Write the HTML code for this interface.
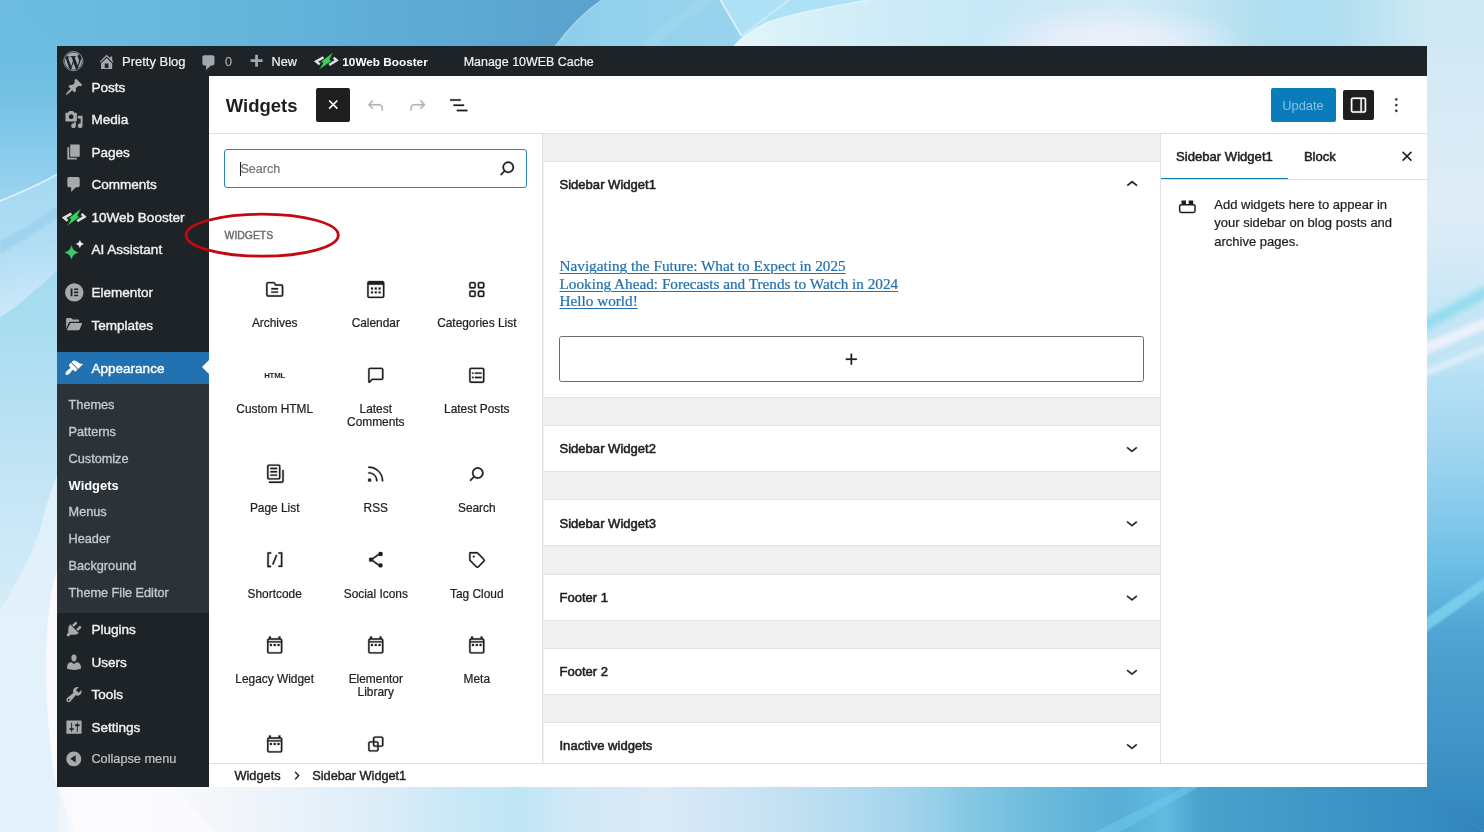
<!DOCTYPE html>
<html lang="en">
<head>
<meta charset="utf-8">
<title>Widgets ‹ Pretty Blog — WordPress</title>
<style>
*{box-sizing:border-box;margin:0;padding:0}
html,body{width:1484px;height:832px;overflow:hidden;background:#7cc4e4}
body{position:relative;font-family:"Liberation Sans",sans-serif;color:#1e1e1e}
.abs{position:absolute}
.t{position:absolute;white-space:nowrap;line-height:1;-webkit-text-stroke:0.22px currentColor}
#bg{position:absolute;left:0;top:0;width:1484px;height:832px}
#win{position:absolute;left:57px;top:45.7px;width:1370px;height:741px;background:#fff;overflow:hidden}
#pg{position:absolute;left:-57px;top:-45.7px;width:1484px;height:832px;will-change:transform}
#adminbar{left:57px;top:45.5px;width:1370px;height:30.2px;background:#1d2327}
#menu{left:57px;top:75.7px;width:152px;height:712.3px;background:#1d2327}
#submenu{left:57px;top:383.8px;width:152px;height:228.8px;background:#2c3338}
#current{left:57px;top:351.8px;width:152px;height:32px;background:#2271b1}
#header{left:209px;top:75.7px;width:1218px;height:58.7px;background:#fff;border-bottom:1px solid #e0e0e0}
#inserter{left:209px;top:134.4px;width:334px;height:628.6px;background:#fff;border-right:1px solid #e0e0e0}
#canvas{left:543px;top:134.4px;width:617.5px;height:628.6px;background:#f0f0f0}
#side{left:1159.5px;top:134.4px;width:267px;height:628.6px;background:#fff;border-left:1px solid #e0e0e0}
#footer{left:209px;top:762.5px;width:1218px;height:25px;background:#fff;border-top:1px solid #e0e0e0}
.card{position:absolute;left:543.5px;width:616px;background:#fff;border-top:1px solid #e2e2e2;border-bottom:1px solid #e2e2e2}
</style>
</head>
<body>
<svg id="bg" viewBox="0 0 1484 832" preserveAspectRatio="none">
<defs>
<linearGradient id="gt" x1="0" y1="0" x2="1" y2="0"><stop offset="0.0000" stop-color="#6cbde1"/><stop offset="0.1011" stop-color="#68b9de"/><stop offset="0.2022" stop-color="#62b2d9"/><stop offset="0.3032" stop-color="#5daad3"/><stop offset="0.3774" stop-color="#5aa4ce"/><stop offset="0.4077" stop-color="#58a2cc"/><stop offset="0.4084" stop-color="#92d0ea"/><stop offset="0.4178" stop-color="#92d0ea"/><stop offset="0.4717" stop-color="#97d2ec"/><stop offset="0.4973" stop-color="#9bd5ee"/><stop offset="0.5020" stop-color="#b4e2f5"/><stop offset="0.5323" stop-color="#bfe8f7"/><stop offset="0.5728" stop-color="#cdeef8"/><stop offset="0.6402" stop-color="#cfeaf6"/><stop offset="0.7075" stop-color="#dcebf7"/><stop offset="0.7547" stop-color="#e6eef9"/><stop offset="0.7951" stop-color="#d3e9f6"/><stop offset="0.8491" stop-color="#b2dff1"/><stop offset="0.8962" stop-color="#addcef"/><stop offset="0.9434" stop-color="#bfe3f2"/><stop offset="1.0000" stop-color="#cde7f3"/></linearGradient>
<linearGradient id="gb" x1="0" y1="0" x2="1" y2="0"><stop offset="0.0000" stop-color="#e2f0fa"/><stop offset="0.0371" stop-color="#e9f3fb"/><stop offset="0.0505" stop-color="#f8f8fc"/><stop offset="0.1348" stop-color="#f6f7fb"/><stop offset="0.1752" stop-color="#eef4fa"/><stop offset="0.2561" stop-color="#dcedf8"/><stop offset="0.3100" stop-color="#c8e8f6"/><stop offset="0.3504" stop-color="#bfe6f5"/><stop offset="0.3908" stop-color="#d2e9f6"/><stop offset="0.4447" stop-color="#dbeaf7"/><stop offset="0.5121" stop-color="#c8e3f3"/><stop offset="0.5728" stop-color="#b4dbf0"/><stop offset="0.6199" stop-color="#9dd2ea"/><stop offset="0.6631" stop-color="#7ec5e2"/><stop offset="0.7143" stop-color="#66b7da"/><stop offset="0.7547" stop-color="#58aed6"/><stop offset="0.7850" stop-color="#5fbbe0"/><stop offset="0.8086" stop-color="#4aa3cd"/><stop offset="0.8760" stop-color="#4098c7"/><stop offset="0.9434" stop-color="#398ec3"/><stop offset="0.9704" stop-color="#358bc0"/><stop offset="1.0000" stop-color="#2f84bc"/></linearGradient>
<linearGradient id="gl" x1="0" y1="0" x2="0" y2="1"><stop offset="0.0000" stop-color="#6cbde1"/><stop offset="0.0553" stop-color="#6cbde1"/><stop offset="0.1202" stop-color="#74c1e4"/><stop offset="0.1683" stop-color="#84c9ea"/><stop offset="0.2163" stop-color="#93d0ee"/><stop offset="0.2464" stop-color="#9fd6f1"/><stop offset="0.3125" stop-color="#a6daf0"/><stop offset="0.3846" stop-color="#a8dcf0"/><stop offset="0.4567" stop-color="#b2dff2"/><stop offset="0.5288" stop-color="#bce3f4"/><stop offset="0.6010" stop-color="#c6e6f6"/><stop offset="0.6731" stop-color="#cdeaf7"/><stop offset="0.7452" stop-color="#d6edf8"/><stop offset="0.8413" stop-color="#e0f0fa"/><stop offset="0.9459" stop-color="#e6f2fb"/><stop offset="1.0000" stop-color="#e4f1fa"/></linearGradient>
<linearGradient id="gr" x1="0" y1="0" x2="0" y2="1"><stop offset="0.0000" stop-color="#cfe8f3"/><stop offset="0.1202" stop-color="#d6eaf5"/><stop offset="0.2404" stop-color="#deedf8"/><stop offset="0.3245" stop-color="#d4e9f6"/><stop offset="0.3606" stop-color="#c9e6f5"/><stop offset="0.4327" stop-color="#bfe3f5"/><stop offset="0.4567" stop-color="#b5dff5"/><stop offset="0.5409" stop-color="#a0d5f0"/><stop offset="0.6370" stop-color="#7ec6ea"/><stop offset="0.6731" stop-color="#6fc0e6"/><stop offset="0.7212" stop-color="#5eb2dd"/><stop offset="0.7572" stop-color="#4fa5d3"/><stop offset="0.8413" stop-color="#4699ca"/><stop offset="0.8894" stop-color="#4294c7"/><stop offset="0.9459" stop-color="#388dc2"/><stop offset="1.0000" stop-color="#2f84bc"/></linearGradient>
<filter id="b05" x="-20%" y="-20%" width="140%" height="140%"><feGaussianBlur stdDeviation="0.6"/></filter>
<filter id="b2" x="-20%" y="-20%" width="140%" height="140%"><feGaussianBlur stdDeviation="2"/></filter>
<filter id="b1" x="-20%" y="-20%" width="140%" height="140%"><feGaussianBlur stdDeviation="1.2"/></filter>
<filter id="b3" x="-20%" y="-20%" width="140%" height="140%"><feGaussianBlur stdDeviation="3"/></filter>
<linearGradient id="gA" gradientUnits="userSpaceOnUse" x1="556" y1="0" x2="800" y2="0"><stop offset="0" stop-color="#8ccdea"/><stop offset="0.25" stop-color="#94d1ec"/><stop offset="0.7" stop-color="#97d3ed"/><stop offset="1" stop-color="#a0d8f0"/></linearGradient><linearGradient id="gC" gradientUnits="userSpaceOnUse" x1="733" y1="0" x2="1484" y2="0"><stop offset="0" stop-color="#e6f6fb"/><stop offset="0.07" stop-color="#d9f1f9"/><stop offset="0.2" stop-color="#cfecf8"/><stop offset="0.34" stop-color="#c6e8f6"/><stop offset="0.45" stop-color="#cfe9f6"/><stop offset="0.52" stop-color="#d2eaf7"/><stop offset="0.6" stop-color="#c6e6f4"/><stop offset="0.72" stop-color="#aedeef"/><stop offset="0.8" stop-color="#afdef0"/><stop offset="0.87" stop-color="#c0e4f2"/><stop offset="0.925" stop-color="#cee8f3"/><stop offset="1" stop-color="#d0e8f4"/></linearGradient><linearGradient id="gCv" x1="0" y1="0" x2="0" y2="1"><stop offset="0" stop-color="#bfe6f5" stop-opacity="0.55"/><stop offset="1" stop-color="#bfe6f5" stop-opacity="0"/></linearGradient><radialGradient id="gBlob" cx="0.5" cy="0.5" r="0.5"><stop offset="0" stop-color="#f0f1fb" stop-opacity="0.95"/><stop offset="0.5" stop-color="#ecf0fa" stop-opacity="0.7"/><stop offset="1" stop-color="#e6eef9" stop-opacity="0"/></radialGradient><linearGradient id="gP1" gradientUnits="userSpaceOnUse" x1="20" y1="185" x2="40" y2="300"><stop offset="0" stop-color="#a5d9f2"/><stop offset="0.5" stop-color="#b0ddf4"/><stop offset="1" stop-color="#c9e6f8"/></linearGradient>
</defs>
<path d="M0 0H1484L1427 46H57Z" fill="url(#gt)"/>
<path d="M0 832H1484L1427 787H57Z" fill="url(#gb)"/>
<path d="M0 0L58 46V787L0 832Z" fill="url(#gl)"/>
<path d="M1484 0L1426 46V787L1484 832Z" fill="url(#gr)"/>
<path d="M555 47 C568 29 584 12 602 0 L800 0 L800 47 Z" fill="url(#gA)"/>
<path d="M555 47 C568 29 584 12 602 0" fill="none" stroke="#a9dbf1" stroke-width="1.6" opacity="0.8"/>
<path d="M640 47 C655 30 680 12 700 0 L716 0 C694 14 668 32 655 47 Z" fill="#a6d9ef" opacity="0.45"/>
<path d="M721 0 L741.500 36 L733 47 L900 47 L900 0 Z" fill="#ade1f6"/>
<path d="M733 47 C745 35 758 26 770 21.500 C795 12.500 830 7 868 0 L1484 0 L1484 47 Z" fill="url(#gC)"/>
<path d="M720.500 0 L741.500 36" fill="none" stroke="#eaf6fc" stroke-width="1.6" opacity="0.85" filter="url(#b05)"/>
<path d="M741.500 36 L789 0" fill="none" stroke="#d3eef9" stroke-width="2.200" opacity="0.7" filter="url(#b05)"/>
<path d="M733 47 C745 35 758 26 770 21.500 C795 12.500 830 7 868 0" fill="none" stroke="#f2fafd" stroke-width="1.400" opacity="0.6" filter="url(#b05)"/>
<ellipse cx="1112" cy="50" rx="140" ry="48" fill="url(#gBlob)"/>
<path d="M0 201 C20 193 40 184 58 174 L58 269 C40 287 20 304 0 318 Z" fill="url(#gP1)"/>
<path d="M0 241 C20 231 40 218 58 205 L58 217 C40 230 20 243 0 254 Z" fill="#8fc8e9" opacity="0.45" filter="url(#b1)"/>
<path d="M0 201 C20 193 40 184 58 174" fill="none" stroke="#e4f4fc" stroke-width="1.500" opacity="0.9" filter="url(#b05)"/>
<path d="M58 474 C50 490 45 510 40 530 C30 560 12 590 0 610 L0 832 L58 832 Z" fill="#e4f1fb" opacity="0.85"/>
<path d="M58 567 C50 590 47 620 46 660 C46 710 50 760 58 792 Z" fill="#fbfafd" opacity="0.95"/>
<path d="M1420 334 L1490 296 L1490 284 L1420 321 Z" fill="#8bdbee" opacity="0.9" filter="url(#b3)"/>
<path d="M1420 357 L1490 327 L1490 316 L1420 345 Z" fill="#edf2fb" opacity="0.95" filter="url(#b2)"/>
<path d="M1420 379 L1490 350 L1490 343 L1420 371 Z" fill="#e6f0fa" opacity="0.8" filter="url(#b2)"/>
<path d="M1420 636 L1490 586 L1490 574 L1420 622 Z" fill="#80d3ee" opacity="0.8" filter="url(#b1)"/>
<path d="M1095 832 L1186 786 L1200 786 L1120 832 Z" fill="#6cc6e8" opacity="0.6"/>
<path d="M57 786 L175 786 L215 832 L75 832 Z" fill="#fbfafd" opacity="0.9"/>
</svg>
<div id="win"><div id="pg">
<div class="abs" id="adminbar"></div>
<div class="abs" id="menu"></div>
<div class="abs" id="submenu"></div>
<div class="abs" id="current"></div>
<div class="abs" id="header"></div>
<div class="abs" id="inserter"></div>
<div class="abs" id="canvas"></div>
<div class="abs" id="side"></div>
<svg class="abs" style="left:63px;top:51px;width:21px;height:21px;overflow:visible;" viewBox="0 0 21 21" fill="#a6abb0"><g transform="translate(0.350 0.100) scale(1.00000 1.00000) translate(-0 -0)"><circle cx="10" cy="10" r="9.600" fill="none" stroke="#a6abb0" stroke-width="0.800"/><path transform="translate(10 10) scale(0.965) translate(-10 -10)" d="M7.780 15.370L4.370 6.220c.55-.02 1.170-.08 1.170-.08.5-.06.44-1.130-.06-1.110 0 0-1.450.11-2.370.11-.18 0-.37 0-.58-.01C4.120 2.690 6.870 1.110 10 1.110c2.330 0 4.450.87 6.050 2.340-.68-.11-1.650.39-1.650 1.580 0 .74.450 1.360.9 2.100.35.61.55 1.360.55 2.460 0 1.490-1.400 5-1.400 5l-3.030-8.370c.54-.02.82-.17.82-.17.5-.05.440-1.250-.06-1.220 0 0-1.440.12-2.380.12-.87 0-2.330-.12-2.330-.12-.5-.03-.56 1.200-.06 1.220l.92.080 1.260 3.410zM17.410 10c.24-.64.740-1.870.430-4.250.7 1.290 1.050 2.710 1.050 4.250 0 3.290-1.730 6.240-4.400 7.780.97-2.590 1.940-5.200 2.920-7.780zM6.100 18.090C3.120 16.650 1.110 13.530 1.110 10c0-1.300.230-2.480.72-3.590C3.250 10.300 4.670 14.200 6.100 18.090zm4.030-6.630l2.580 6.980c-.86.290-1.760.450-2.710.450-.79 0-1.570-.11-2.290-.33.810-2.380 1.620-4.740 2.420-7.100z"/></g></svg>
<svg class="abs" style="left:97px;top:52px;width:19px;height:19px;overflow:visible;" viewBox="0 0 19 19" fill="#a3a8ad"><g transform="translate(0.300 0.300) scale(0.93000 0.93000) translate(-0 -0)"><path d="M16 8.500l1.530 1.530-1.060 1.060L10 4.620l-6.470 6.470-1.060-1.060L10 2.500l4 4v-2h2v4zm-6-2.460l6 5.990V18H4v-5.970zM12 17v-5H8v5h4z"/></g></svg>
<div class="t" style="left:122.00px;top:53.00px;font-size:12.98px;line-height:17px;color:#f0f0f1;">Pretty Blog</div>
<svg class="abs" style="left:199px;top:53px;width:20px;height:19px;overflow:visible;" viewBox="0 0 20 19" fill="#a3a8ad"><g transform="translate(0.600 0.300) scale(0.93000 0.93000) translate(-0 -0)"><path d="M5 2h9c1.100 0 2 .9 2 2v7c0 1.100-.9 2-2 2h-2l-5 5v-5H5c-1.100 0-2-.9-2-2V4c0-1.100.9-2 2-2z"/></g></svg>
<div class="t" style="left:225.00px;top:53.63px;font-size:12.6px;line-height:16px;color:#a7aaad;">0</div>
<svg class="abs" style="left:246px;top:52px;width:20px;height:20px;overflow:visible;" viewBox="0 0 20 20" fill="#a3a8ad"><g transform="translate(0.800 0.800) scale(0.93000 0.93000) translate(-0 -0)"><path d="M17 7v3h-5v5H9v-5H4V7h5V2h3v5h5z"/></g></svg>
<div class="t" style="left:271.60px;top:53.62px;font-size:12.65px;line-height:16px;color:#f0f0f1;">New</div>
<svg class="abs" style="left:313px;top:52px;width:26px;height:18px;overflow:visible;overflow:visible;" viewBox="0 0 26 18" fill="none"><g transform="translate(0.700 0.100) scale(1.00000 1.00000) translate(-0 -0)"><path d="M9.800 5.300 L2.400 9.400 L6.000 12.300" fill="none" stroke="#dfe1e4" stroke-width="2.500" stroke-linejoin="miter"/><path d="M19.900 5.500 L23.000 8.300 L15.500 12.700" fill="none" stroke="#dfe1e4" stroke-width="2.500" stroke-linejoin="miter"/><path d="M19.700 -0.200 L6.400 10.100 L9.300 10.700 L5.200 17.900 L18.800 8.300 L16.000 7.700 Z" fill="#37d15a" stroke="#1d2327" stroke-width="0.700"/></g></svg>
<div class="t" style="left:342.30px;top:54.42px;font-size:11.77px;line-height:15px;color:#ffffff;font-weight:700;-webkit-text-stroke:0;">10Web Booster</div>
<div class="t" style="left:463.75px;top:53.69px;font-size:12.44px;line-height:16px;color:#f0f0f1;">Manage 10WEB Cache</div>
<div class="t" style="left:91.40px;top:78.60px;font-size:13.55px;line-height:18px;color:#f0f0f1;-webkit-text-stroke:0.4px currentColor;">Posts</div>
<svg class="abs" style="left:64px;top:77px;width:20px;height:20px;overflow:visible;" viewBox="0 0 20 20" fill="#a7aaad"><g transform="translate(0.500 0.500) scale(0.95000 0.95000) translate(-0 -0)"><path d="M10.440 3.020l1.820-1.820 6.360 6.350-1.830 1.820c-1.050-.68-2.480-.57-3.410.36l-.75.750c-.92.930-1.040 2.350-.35 3.410l-1.830 1.820-2.410-2.410-2.800 2.790c-.42.420-3.380 2.710-3.800 2.290s1.860-3.390 2.280-3.810l2.790-2.790L4.100 9.360l1.830-1.820c1.050.69 2.480.57 3.400-.36l.75-.75c.93-.92 1.050-2.350.36-3.410z"/></g></svg>
<div class="t" style="left:91.40px;top:111.10px;font-size:13.55px;line-height:18px;color:#f0f0f1;-webkit-text-stroke:0.4px currentColor;">Media</div>
<svg class="abs" style="left:64px;top:110px;width:20px;height:19px;overflow:visible;" viewBox="0 0 20 19" fill="#a7aaad"><g transform="translate(0.500 0.000) scale(0.95000 0.95000) translate(-0 -0)"><path d="M13 11V4c0-.55-.45-1-1-1h-1.670L9 1H5L3.670 3H2c-.55 0-1 .45-1 1v7c0 .55.450 1 1 1h10c.55 0 1-.45 1-1zM7 4.500c1.380 0 2.500 1.120 2.500 2.500S8.380 9.500 7 9.500 4.500 8.380 4.500 7 5.620 4.500 7 4.500zM14 6h5v10.500c0 1.380-1.120 2.500-2.500 2.500S14 17.880 14 16.500s1.120-2.500 2.500-2.500c.17 0 .34.020.5.050V9h-3V6zm-4 8.050V13h2v3.500c0 1.380-1.120 2.500-2.500 2.500S7 17.880 7 16.500 8.120 14 9.500 14c.17 0 .34.020.5.050z"/></g></svg>
<div class="t" style="left:91.40px;top:143.60px;font-size:13.55px;line-height:18px;color:#f0f0f1;-webkit-text-stroke:0.4px currentColor;">Pages</div>
<svg class="abs" style="left:64px;top:142px;width:20px;height:20px;overflow:visible;" viewBox="0 0 20 20" fill="#a7aaad"><g transform="translate(0.500 0.500) scale(0.95000 0.95000) translate(-0 -0)"><path d="M6 15V2h10v13H6zm-1 1h8v2H3V5h2v11z"/></g></svg>
<div class="t" style="left:91.40px;top:176.10px;font-size:13.55px;line-height:18px;color:#f0f0f1;-webkit-text-stroke:0.4px currentColor;">Comments</div>
<svg class="abs" style="left:64px;top:175px;width:20px;height:19px;overflow:visible;" viewBox="0 0 20 19" fill="#a7aaad"><g transform="translate(0.500 0.000) scale(0.95000 0.95000) translate(-0 -0)"><path d="M5 2h9c1.100 0 2 .9 2 2v7c0 1.100-.9 2-2 2h-2l-5 5v-5H5c-1.100 0-2-.9-2-2V4c0-1.100.9-2 2-2z"/></g></svg>
<div class="t" style="left:91.40px;top:208.50px;font-size:13.55px;line-height:18px;color:#f0f0f1;-webkit-text-stroke:0.4px currentColor;">10Web Booster</div>
<div class="t" style="left:91.40px;top:241.30px;font-size:13.55px;line-height:18px;color:#f0f0f1;-webkit-text-stroke:0.4px currentColor;">AI Assistant</div>
<div class="t" style="left:91.40px;top:284.30px;font-size:13.55px;line-height:18px;color:#f0f0f1;-webkit-text-stroke:0.4px currentColor;">Elementor</div>
<div class="t" style="left:91.40px;top:316.70px;font-size:13.55px;line-height:18px;color:#f0f0f1;-webkit-text-stroke:0.4px currentColor;">Templates</div>
<div class="t" style="left:91.40px;top:359.50px;font-size:13.55px;line-height:18px;color:#ffffff;-webkit-text-stroke:0.4px currentColor;">Appearance</div>
<svg class="abs" style="left:64px;top:358px;width:20px;height:20px;overflow:visible;" viewBox="0 0 20 20" fill="#ffffff"><g transform="translate(0.500 0.400) scale(0.95000 0.95000) translate(-0 -0)"><path d="M14.480 11.060L7.410 3.990l1.500-1.500c.5-.56 2.300-.47 3.510.32 1.210.800 1.430 1.280 2.910 2.100 1.180.64 2.450 1.260 4.450.85zm-.71.710L6.700 4.700 4.930 6.470c-.39.390-.39 1.020 0 1.410l1.060 1.060c.39.390.39 1.030 0 1.420-.6.600-1.430 1.110-2.210 1.690-.35.260-.7.530-1.010.840C1.430 14.230.4 16.080 1.400 17.070c.99 1 2.840-.03 4.180-1.360.31-.31.580-.66.850-1.020.57-.78 1.080-1.610 1.690-2.210.39-.39 1.020-.39 1.410 0l1.060 1.060c.390.39 1.020.39 1.410 0z"/></g></svg>
<div class="t" style="left:91.40px;top:620.70px;font-size:13.55px;line-height:18px;color:#f0f0f1;-webkit-text-stroke:0.4px currentColor;">Plugins</div>
<svg class="abs" style="left:64px;top:619px;width:20px;height:20px;overflow:visible;" viewBox="0 0 20 20" fill="#a7aaad"><g transform="translate(0.500 0.600) scale(0.95000 0.95000) translate(-0 -0)"><path d="M13.110 4.360L9.870 7.600 8 5.730l3.240-3.240c.35-.34 1.050-.2 1.560.32.520.51.660 1.210.31 1.550zm-8 1.770l.91-1.120 9.010 9.010-1.190.84c-.71.710-2.630 1.160-3.820 1.160H6.140L4.900 17.260c-.59.59-1.540.59-2.120 0-.59-.58-.59-1.530 0-2.120l1.240-1.240v-3.880c0-1.130.4-3.190 1.090-3.890zm7.260 3.970l3.240-3.240c.34-.35 1.040-.21 1.550.31.520.51.660 1.210.31 1.550l-3.240 3.250z"/></g></svg>
<div class="t" style="left:91.40px;top:653.80px;font-size:13.55px;line-height:18px;color:#f0f0f1;-webkit-text-stroke:0.4px currentColor;">Users</div>
<svg class="abs" style="left:64px;top:652px;width:20px;height:20px;overflow:visible;" viewBox="0 0 20 20" fill="#a7aaad"><g transform="translate(0.500 0.700) scale(0.95000 0.95000) translate(-0 -0)"><path d="M10 9.250c-2.270 0-2.730-3.440-2.730-3.440C7 4.020 7.820 2 9.970 2c2.160 0 2.980 2.020 2.710 3.810 0 0-.41 3.440-2.680 3.440zm0 2.570L12.720 10c2.390 0 4.520 2.330 4.520 4.530v2.490s-3.650 1.130-7.240 1.130c-3.650 0-7.240-1.130-7.240-1.130v-2.490c0-2.250 1.940-4.480 4.470-4.480z"/></g></svg>
<div class="t" style="left:91.40px;top:686.20px;font-size:13.55px;line-height:18px;color:#f0f0f1;-webkit-text-stroke:0.4px currentColor;">Tools</div>
<svg class="abs" style="left:64px;top:685px;width:20px;height:20px;overflow:visible;" viewBox="0 0 20 20" fill="#a7aaad"><g transform="translate(0.500 0.100) scale(0.95000 0.95000) translate(-0 -0)"><path d="M16.680 9.770c-1.340 1.340-3.300 1.670-4.950.99l-5.410 6.520c-.99.990-2.590.99-3.580 0s-.99-2.590 0-3.570l6.520-5.420c-.68-1.650-.35-3.610.99-4.950 1.280-1.280 3.120-1.620 4.720-1.060l-2.890 2.890 2.820 2.820 2.860-2.870c.53 1.580.18 3.390-1.080 4.650zM3.810 16.210c.4.390 1.040.39 1.430 0 .4-.4.400-1.040 0-1.430-.39-.4-1.030-.4-1.430 0-.39.390-.39 1.030 0 1.430z"/></g></svg>
<div class="t" style="left:91.40px;top:718.80px;font-size:13.55px;line-height:18px;color:#f0f0f1;-webkit-text-stroke:0.4px currentColor;">Settings</div>
<svg class="abs" style="left:64px;top:717px;width:20px;height:20px;overflow:visible;" viewBox="0 0 20 20" fill="#a7aaad"><g transform="translate(0.500 0.700) scale(0.95000 0.95000) translate(-0 -0)"><path d="M18 16V4c0-.55-.45-1-1-1H3c-.55 0-1 .45-1 1v12c0 .55.450 1 1 1h14c.55 0 1-.45 1-1zM8 11h1c.55 0 1 .45 1 1s-.45 1-1 1H8v1.500c0 .28-.22.500-.5.500s-.5-.22-.5-.5V13H6c-.55 0-1-.45-1-1s.45-1 1-1h1V5.500c0-.28.220-.5.500-.5s.5.220.5.500V11zm5-2h-1c-.55 0-1-.45-1-1s.45-1 1-1h1V5.500c0-.28.220-.5.500-.5s.5.220.5.500V7h1c.55 0 1 .45 1 1s-.45 1-1 1h-1v5.500c0 .28-.22.500-.5.500s-.5-.22-.5-.5V9z"/></g></svg>
<svg class="abs" style="left:61px;top:208px;width:26px;height:19px;overflow:visible;overflow:visible;" viewBox="0 0 26 19" fill="none"><g transform="translate(0.600 0.400) scale(1.00000 1.00000) translate(-0 -0)"><path d="M9.800 5.300 L2.400 9.400 L6.000 12.300" fill="none" stroke="#dfe1e4" stroke-width="2.500" stroke-linejoin="miter"/><path d="M19.900 5.500 L23.000 8.300 L15.500 12.700" fill="none" stroke="#dfe1e4" stroke-width="2.500" stroke-linejoin="miter"/><path d="M19.700 -0.200 L6.400 10.100 L9.300 10.700 L5.200 17.900 L18.800 8.300 L16.000 7.700 Z" fill="#37d15a" stroke="#1d2327" stroke-width="0.700"/></g></svg>
<svg class="abs" style="left:57px;top:236px;width:40px;height:30px;overflow:visible;" viewBox="0 0 40 30" fill="none"><g transform="translate(0.000 0.000) scale(1.00000 1.00000) translate(-57 -236)"><path d="M71.5 245.20000000000002 C73.084 249.8656 74.0344 250.816 78.7 252.4 C74.0344 253.984 73.084 254.9344 71.5 259.6 C69.916 254.9344 68.9656 253.984 64.3 252.4 C68.9656 250.816 69.916 249.8656 71.5 245.20000000000002Z" fill="#3fc46c"/><path d="M79.9 239.8 C80.82400000000001 242.5216 81.3784 243.076 84.10000000000001 244.0 C81.3784 244.924 80.82400000000001 245.4784 79.9 248.2 C78.976 245.4784 78.42160000000001 244.924 75.7 244.0 C78.42160000000001 243.076 78.976 242.5216 79.9 239.8Z" fill="#eceef0"/></g></svg>
<svg class="abs" style="left:65px;top:283px;width:19px;height:19px;overflow:visible;" viewBox="0 0 19 19" fill="none"><g transform="translate(0.100 0.200) scale(0.92000 0.92000) translate(-0 -0)"><circle cx="10" cy="10" r="10" fill="#a7aaad"/><path d="M6 5.800h2v8.400H6zM9.800 5.800h4.400v1.700H9.800zM9.800 9.150h4.400v1.700H9.800zM9.800 12.500h4.400v1.700H9.800z" fill="#1d2327"/></g></svg>
<svg class="abs" style="left:65px;top:316px;width:18px;height:16px;overflow:visible;" viewBox="0 0 18 16" fill="none"><g transform="translate(0.130 0.350) scale(0.97000 0.96875) translate(-0 -0)"><path d="M1 2.600 C1 2 1.400 1.600 2 1.600 H6.200 L7.800 3.300 H13.400 C14 3.300 14.400 3.700 14.400 4.300 V5.600 H5.200 C4.500 5.600 4 5.900 3.700 6.600 L1 12.800 Z" fill="#a7aaad"/><path d="M5.400 6.800 H17 C17.500 6.800 17.700 7.200 17.500 7.700 L14.900 13.600 C14.700 14.100 14.300 14.400 13.800 14.400 H1.600 Z" fill="#a7aaad"/></g></svg>
<div class="t" style="left:68.60px;top:397.40px;font-size:12.7px;line-height:17px;color:#c6c8ca;-webkit-text-stroke:0.35px currentColor;">Themes</div>
<div class="t" style="left:68.60px;top:424.10px;font-size:12.7px;line-height:17px;color:#c6c8ca;-webkit-text-stroke:0.35px currentColor;">Patterns</div>
<div class="t" style="left:68.60px;top:450.90px;font-size:12.7px;line-height:17px;color:#c6c8ca;-webkit-text-stroke:0.35px currentColor;">Customize</div>
<div class="t" style="left:68.60px;top:477.23px;font-size:12.9px;line-height:17px;color:#ffffff;font-weight:700;-webkit-text-stroke:0;">Widgets</div>
<div class="t" style="left:68.60px;top:504.30px;font-size:12.7px;line-height:17px;color:#c6c8ca;-webkit-text-stroke:0.35px currentColor;">Menus</div>
<div class="t" style="left:68.60px;top:531.00px;font-size:12.7px;line-height:17px;color:#c6c8ca;-webkit-text-stroke:0.35px currentColor;">Header</div>
<div class="t" style="left:68.60px;top:557.90px;font-size:12.7px;line-height:17px;color:#c6c8ca;-webkit-text-stroke:0.35px currentColor;">Background</div>
<div class="t" style="left:68.60px;top:584.80px;font-size:12.7px;line-height:17px;color:#c6c8ca;-webkit-text-stroke:0.35px currentColor;">Theme File Editor</div>
<div class="abs" style="left:202px;top:360.3px;width:0;height:0;border:7.6px solid transparent;border-right-color:#fff;border-left-width:0"></div>
<svg class="abs" style="left:64px;top:749px;width:20px;height:20px;overflow:visible;" viewBox="0 0 20 20" fill="#a7aaad"><g transform="translate(0.300 0.400) scale(0.95000 0.95000) translate(-0 -0)"><path d="M10 2.160c4.330 0 7.840 3.510 7.840 7.840s-3.510 7.840-7.840 7.840S2.160 14.330 2.160 10 5.670 2.160 10 2.160zm2 11.720V6.120L6.180 9.970z"/></g></svg>
<div class="t" style="left:91.40px;top:750.09px;font-size:12.74px;line-height:17px;color:#bfc2c5;">Collapse menu</div>
<div class="t" style="left:225.75px;top:93.59px;font-size:18.5px;line-height:24px;color:#1e1e1e;font-weight:700;-webkit-text-stroke:0;">Widgets</div>
<div class="abs" style="left:316.2px;top:88px;width:34.1px;height:34px;background:#1e1e1e;border-radius:2px"></div>
<svg class="abs" style="left:327px;top:98px;width:13px;height:13px;overflow:visible;" viewBox="0 0 13 13" fill="none"><g transform="translate(0.250 0.600) scale(1.00000 1.00000) translate(6 6)"><path d="M-4.100 -4.100L4.100 4.100M4.100 -4.100L-4.100 4.100" stroke="#fff" stroke-width="1.650" fill="none"/></g></svg>
<svg class="abs" style="left:364px;top:93px;width:24px;height:24px;overflow:visible;" viewBox="0 0 24 24" fill="#b4b4b4"><g transform="translate(0.170 0.770) scale(0.95250 0.95250) translate(-0 -0)"><g stroke="#b4b4b4" stroke-width="0.3"><path d="M18.300 11.700c-.6-.6-1.400-.9-2.300-.9H6.700l2.900-3.300-1.100-1-4.500 5L8.500 16l1-1-2.700-2.700H16c.5 0 .9.200 1.300.5 1 1 1 3.400 1 4.500v.3h1.500v-.2c0-1.500 0-4.300-1.500-5.700z"/></g></g></svg>
<svg class="abs" style="left:406px;top:93px;width:24px;height:24px;overflow:visible;" viewBox="0 0 24 24" fill="#b4b4b4"><g transform="translate(0.170 0.770) scale(0.95250 0.95250) translate(-0 -0)"><g stroke="#b4b4b4" stroke-width="0.3"><path d="M15.600 6.500l-1.100 1 2.900 3.300H8c-.9 0-1.700.3-2.300.9-1.400 1.500-1.400 4.200-1.400 5.600v.2h1.500v-.3c0-1.100 0-3.500 1-4.500.3-.3.700-.5 1.300-.5h9.200L14.500 15l1.100 1.100 4.600-4.600-4.600-5z"/></g></g></svg>
<svg class="abs" style="left:447px;top:93px;width:24px;height:24px;overflow:visible;" viewBox="0 0 24 24" fill="#1e1e1e"><g transform="translate(0.370 0.570) scale(0.95250 0.95250) translate(-0 -0)"><g stroke="#1e1e1e" stroke-width="0.3"><path d="M3 6h11v1.500H3V6Zm3.500 5.500h11V13h-11v-1.500ZM21 17H10v1.500h11V17Z"/></g></g></svg>
<div class="abs" style="left:1270.6px;top:87.8px;width:65.2px;height:34.3px;background:#0a7cba;border-radius:2px"></div>
<div class="t" style="left:1282.20px;top:96.73px;font-size:12.9px;line-height:17px;color:#86c1e3;-webkit-text-stroke:0;">Update</div>
<div class="abs" style="left:1343.1px;top:89.9px;width:30.6px;height:30.4px;background:#1e1e1e;border-radius:2px"></div>
<svg class="abs" style="left:1347px;top:93px;width:23px;height:24px;overflow:visible;" viewBox="0 0 23 24" fill="#fff"><g transform="translate(0.070 0.670) scale(0.95250 0.95250) translate(-0 -0)"><g stroke="#fff" stroke-width="0.3"><path fill-rule="evenodd" clip-rule="evenodd" d="M18 4H6c-1.100 0-2 .9-2 2v12c0 1.100.9 2 2 2h12c1.100 0 2-.9 2-2V6c0-1.100-.9-2-2-2zm-4 14.500H6c-.3 0-.5-.2-.5-.5V6c0-.3.200-.5.500-.5h8v13zm4.500-.5c0 .3-.2.500-.5.500h-2.500v-13H18c.3 0 .5.200.5.500v12z"/></g></g></svg>
<svg class="abs" style="left:1384px;top:93px;width:24px;height:24px;overflow:visible;" viewBox="0 0 24 24" fill="#1e1e1e"><g transform="translate(0.870 0.670) scale(0.95250 0.95250) translate(-0 -0)"><g stroke="#1e1e1e" stroke-width="0.3"><path d="M13 19h-2v-2h2v2zm0-6h-2v-2h2v2zm0-6h-2V5h2v2z"/></g></g></svg>
<div class="abs" style="left:223.7px;top:148.7px;width:303.7px;height:39.7px;border:1.9px solid #2a84be;border-radius:3px;background:#fff"></div>
<div class="abs" style="left:239.9px;top:161.7px;width:1px;height:14px;background:#1e1e1e"></div>
<div class="t" style="left:240.40px;top:161.13px;font-size:12.6px;line-height:16px;color:#757575;">Search</div>
<svg class="abs" style="left:495px;top:156px;width:24px;height:24px;overflow:visible;" viewBox="0 0 24 24" fill="#1e1e1e"><g transform="translate(0.870 0.770) scale(0.95250 0.95250) translate(-0 -0)"><g stroke="#1e1e1e" stroke-width="0.3"><path d="M13 5c-3.300 0-6 2.700-6 6 0 1.400.5 2.700 1.300 3.700l-3.800 3.800 1.100 1.100 3.800-3.800c1 .8 2.300 1.300 3.700 1.300 3.300 0 6-2.700 6-6S16.300 5 13 5zm0 10.500c-2.500 0-4.500-2-4.500-4.500s2-4.500 4.500-4.500 4.500 2 4.500 4.500-2 4.500-4.500 4.500z"/></g></g></svg>
<div class="t" style="left:224.60px;top:229.19px;font-size:10.41px;line-height:14px;color:#6a6a6a;-webkit-text-stroke:0.4px currentColor;">WIDGETS</div>
<svg class="abs" style="left:263px;top:278px;width:24px;height:23px;overflow:visible;" viewBox="0 0 24 23" fill="#1e1e1e"><g transform="translate(0.270 0.070) scale(0.95250 0.95250) translate(-0 -0)"><g stroke="#1e1e1e" stroke-width="0.3"><path fill-rule="evenodd" clip-rule="evenodd" d="M11.934 7.406a1 1 0 0 0 .914.594H19a.5.5 0 0 1 .5.500v9a.5.5 0 0 1-.5.500H5a.5.5 0 0 1-.5-.5V6a.5.5 0 0 1 .5-.5h5.764a.5.5 0 0 1 .447.276l.723 1.630Zm1.064-1.216a.5.5 0 0 0 .462.310H19a2 2 0 0 1 2 2v9a2 2 0 0 1-2 2H5a2 2 0 0 1-2-2V6a2 2 0 0 1 2-2h5.764a2 2 0 0 1 1.789 1.106l.445 1.084ZM8.500 10.500h7V12h-7v-1.500Zm7 3.500h-7v1.500h7V14Z"/></g></g></svg>
<div class="t" style="left:219.70px;top:317.38px;font-size:11.9px;line-height:13px;color:#1e1e1e;white-space:normal;width:110px;text-align:center;">Archives</div>
<svg class="abs" style="left:364px;top:278px;width:24px;height:23px;overflow:visible;" viewBox="0 0 24 23" fill="#1e1e1e"><g transform="translate(0.370 0.070) scale(0.95250 0.95250) translate(-0 -0)"><g stroke="#1e1e1e" stroke-width="0.3"><path d="M19 3H5c-1.100 0-2 .9-2 2v14c0 1.100.9 2 2 2h14c1.100 0 2-.9 2-2V5c0-1.100-.9-2-2-2zm.5 16c0 .3-.2.500-.5.500H5c-.3 0-.5-.2-.5-.5V7h15v12zM9 10H7v2h2v-2zm0 4H7v2h2v-2zm4-4h-2v2h2v-2zm4 0h-2v2h2v-2zm-4 4h-2v2h2v-2zm4 0h-2v2h2v-2z"/></g></g></svg>
<div class="t" style="left:320.80px;top:317.38px;font-size:11.9px;line-height:13px;color:#1e1e1e;white-space:normal;width:110px;text-align:center;">Calendar</div>
<svg class="abs" style="left:465px;top:278px;width:24px;height:23px;overflow:visible;" viewBox="0 0 24 23" fill="#1e1e1e"><g transform="translate(0.370 0.070) scale(0.95250 0.95250) translate(-0 -0)"><g stroke="#1e1e1e" stroke-width="0.3"><path fill-rule="evenodd" clip-rule="evenodd" d="M6 5.500h3a.5.5 0 01.5.500v3a.5.5 0 01-.5.500H6a.5.5 0 01-.5-.5V6a.5.5 0 01.5-.5zM4 6a2 2 0 012-2h3a2 2 0 012 2v3a2 2 0 01-2 2H6a2 2 0 01-2-2V6zm11-.5h3a.5.5 0 01.5.500v3a.5.5 0 01-.5.500h-3a.5.5 0 01-.5-.5V6a.5.5 0 01.5-.5zM13 6a2 2 0 012-2h3a2 2 0 012 2v3a2 2 0 01-2 2h-3a2 2 0 01-2-2V6zm5 8.500h-3a.5.5 0 00-.5.500v3a.5.5 0 00.5.500h3a.5.5 0 00.5-.5v-3a.5.5 0 00-.5-.5zM15 13a2 2 0 00-2 2v3a2 2 0 002 2h3a2 2 0 002-2v-3a2 2 0 00-2-2h-3zm-9 1.500h3a.5.5 0 01.5.500v3a.5.5 0 01-.5.500H6a.5.5 0 01-.5-.5v-3a.5.5 0 01.5-.5zM4 15a2 2 0 012-2h3a2 2 0 012 2v3a2 2 0 01-2 2H6a2 2 0 01-2-2v-3z"/></g></g></svg>
<div class="t" style="left:421.80px;top:317.38px;font-size:11.9px;line-height:13px;color:#1e1e1e;white-space:normal;width:110px;text-align:center;">Categories List</div>
<div class="t" style="left:254.70px;top:370.51px;font-size:7.9px;line-height:10px;color:#1e1e1e;font-weight:700;-webkit-text-stroke:0;letter-spacing:-0.2px;width:40px;text-align:center;">HTML</div>
<div class="t" style="left:219.70px;top:402.98px;font-size:11.9px;line-height:13px;color:#1e1e1e;white-space:normal;width:110px;text-align:center;">Custom HTML</div>
<svg class="abs" style="left:364px;top:363px;width:24px;height:24px;overflow:visible;" viewBox="0 0 24 24" fill="#1e1e1e"><g transform="translate(0.370 0.870) scale(0.95250 0.95250) translate(-0 -0)"><g stroke="#1e1e1e" stroke-width="0.3"><path d="M18 4H6c-1.100 0-2 .9-2 2v12.900c0 .6.500 1.100 1.100 1.100.3 0 .5-.1.800-.3L8.500 17H18c1.100 0 2-.9 2-2V6c0-1.100-.9-2-2-2zm.5 11c0 .3-.2.500-.5.500H7.900l-2.400 2.400V6c0-.3.200-.5.500-.5h12c.3 0 .5.200.5.500v9z"/></g></g></svg>
<div class="t" style="left:320.80px;top:402.98px;font-size:11.9px;line-height:13px;color:#1e1e1e;white-space:normal;width:110px;text-align:center;">Latest<br>Comments</div>
<svg class="abs" style="left:465px;top:363px;width:24px;height:24px;overflow:visible;" viewBox="0 0 24 24" fill="#1e1e1e"><g transform="translate(0.370 0.870) scale(0.95250 0.95250) translate(-0 -0)"><g stroke="#1e1e1e" stroke-width="0.3"><path d="M18 5.500H6a.5.5 0 0 0-.5.500v12a.5.5 0 0 0 .5.500h12a.5.5 0 0 0 .5-.5V6a.5.5 0 0 0-.5-.5ZM6 4h12a2 2 0 0 1 2 2v12a2 2 0 0 1-2 2H6a2 2 0 0 1-2-2V6a2 2 0 0 1 2-2Zm1 5h1.500v1.500H7V9Zm1.500 4.500H7V15h1.500v-1.500ZM10 9h7v1.500h-7V9Zm7 4.500h-7V15h7v-1.500Z"/></g></g></svg>
<div class="t" style="left:421.80px;top:402.98px;font-size:11.9px;line-height:13px;color:#1e1e1e;white-space:normal;width:110px;text-align:center;">Latest Posts</div>
<svg class="abs" style="left:263px;top:462px;width:24px;height:24px;overflow:visible;" viewBox="0 0 24 24" fill="#1e1e1e"><g transform="translate(0.270 0.470) scale(0.95250 0.95250) translate(-0 -0)"><g stroke="#1e1e1e" stroke-width="0.3"><path d="M14.500 5.500h-7V7h7V5.500ZM7.500 9h7v1.500h-7V9Zm7 3.500h-7V14h7v-1.500Z"/><path fill-rule="evenodd" d="M16 2H6a2 2 0 0 0-2 2v12a2 2 0 0 0 2 2h10a2 2 0 0 0 2-2V4a2 2 0 0 0-2-2ZM6 3.500h10a.5.5 0 0 1 .5.500v12a.5.5 0 0 1-.5.500H6a.5.5 0 0 1-.5-.5V4a.5.5 0 0 1 .5-.5Z"/><path d="M20 8v11c0 .69-.31 1-.999 1H6v1.500h13.001c1.520 0 2.499-.982 2.499-2.500V8H20Z"/></g></g></svg>
<div class="t" style="left:219.70px;top:501.78px;font-size:11.9px;line-height:13px;color:#1e1e1e;white-space:normal;width:110px;text-align:center;">Page List</div>
<svg class="abs" style="left:364px;top:462px;width:24px;height:24px;overflow:visible;" viewBox="0 0 24 24" fill="#1e1e1e"><g transform="translate(0.370 0.470) scale(0.95250 0.95250) translate(-0 -0)"><g stroke="#1e1e1e" stroke-width="0.3"><path d="M5 10.200h-.8v1.500H5c1.900 0 3.800.8 5.100 2.100 1.400 1.400 2.100 3.200 2.100 5.100v.8h1.500V19c0-2.300-.9-4.500-2.600-6.200-1.600-1.600-3.800-2.600-6.100-2.600zm10.400-1.600C12.600 5.800 8.900 4.200 5 4.200h-.8v1.500H5c3.500 0 6.900 1.400 9.400 3.900s3.900 5.800 3.900 9.400v.8h1.500V19c0-3.900-1.600-7.600-4.400-10.400zM4 20h3v-3H4v3z"/></g></g></svg>
<div class="t" style="left:320.80px;top:501.78px;font-size:11.9px;line-height:13px;color:#1e1e1e;white-space:normal;width:110px;text-align:center;">RSS</div>
<svg class="abs" style="left:465px;top:462px;width:24px;height:24px;overflow:visible;" viewBox="0 0 24 24" fill="#1e1e1e"><g transform="translate(0.370 0.470) scale(0.95250 0.95250) translate(-0 -0)"><g stroke="#1e1e1e" stroke-width="0.3"><path d="M13 5c-3.300 0-6 2.700-6 6 0 1.400.5 2.700 1.300 3.700l-3.800 3.800 1.100 1.100 3.800-3.800c1 .8 2.300 1.300 3.700 1.300 3.300 0 6-2.700 6-6S16.300 5 13 5zm0 10.500c-2.500 0-4.500-2-4.500-4.500s2-4.500 4.500-4.500 4.500 2 4.500 4.500-2 4.500-4.500 4.500z"/></g></g></svg>
<div class="t" style="left:421.80px;top:501.78px;font-size:11.9px;line-height:13px;color:#1e1e1e;white-space:normal;width:110px;text-align:center;">Search</div>
<svg class="abs" style="left:263px;top:548px;width:24px;height:24px;overflow:visible;" viewBox="0 0 24 24" fill="#1e1e1e"><g transform="translate(0.270 0.270) scale(0.95250 0.95250) translate(-0 -0)"><g stroke="#1e1e1e" stroke-width="0.3"><path d="M16 4.200v1.500h2.500v12.500H16v1.500h4V4.200h-4zM4.200 19.800h4v-1.500H5.800V5.800h2.500V4.200h-4l-.1 15.600zm5.100-3.100l1.400.6 4-10-1.400-.6-4 10z"/></g></g></svg>
<div class="t" style="left:219.70px;top:587.58px;font-size:11.9px;line-height:13px;color:#1e1e1e;white-space:normal;width:110px;text-align:center;">Shortcode</div>
<svg class="abs" style="left:364px;top:548px;width:24px;height:24px;overflow:visible;" viewBox="0 0 24 24" fill="#1e1e1e"><g transform="translate(0.370 0.270) scale(0.95250 0.95250) translate(-0 -0)"><g stroke="#1e1e1e" stroke-width="0.3"><path d="M9 11.800l6.100-4.500c.1.400.4.700.9.700h2c.6 0 1-.4 1-1V5c0-.6-.4-1-1-1h-2c-.6 0-1 .4-1 1v.4l-6.400 4.800c-.2-.1-.4-.2-.6-.2H6c-.6 0-1 .4-1 1v2c0 .6.400 1 1 1h2c.2 0 .4-.1.600-.2l6.400 4.800v.4c0 .6.400 1 1 1h2c.6 0 1-.4 1-1v-2c0-.6-.4-1-1-1h-2c-.5 0-.8.300-.9.700L9 12.200v-.4z"/></g></g></svg>
<div class="t" style="left:320.80px;top:587.58px;font-size:11.9px;line-height:13px;color:#1e1e1e;white-space:normal;width:110px;text-align:center;">Social Icons</div>
<svg class="abs" style="left:465px;top:548px;width:24px;height:24px;overflow:visible;" viewBox="0 0 24 24" fill="#1e1e1e"><g transform="translate(0.370 0.270) scale(0.95250 0.95250) translate(-0 -0)"><g stroke="#1e1e1e" stroke-width="0.3"><path fill-rule="evenodd" d="M4.750 4a.75.75 0 0 0-.75.750v7.826c0 .2.080.39.220.53l6.720 6.716a2.313 2.313 0 0 0 3.276-.001l5.610-5.611-.531-.53.532.528a2.315 2.315 0 0 0 0-3.264L13.104 4.220a.75.75 0 0 0-.53-.22H4.750ZM19 12.576a.815.815 0 0 1-.236.574l-5.610 5.611a.814.814 0 0 1-1.153 0L5.500 12.264V5.500h6.763l6.500 6.502a.816.816 0 0 1 .237.574ZM8.750 9.750a1 1 0 1 0 0-2 1 1 0 0 0 0 2Z"/></g></g></svg>
<div class="t" style="left:421.80px;top:587.58px;font-size:11.9px;line-height:13px;color:#1e1e1e;white-space:normal;width:110px;text-align:center;">Tag Cloud</div>
<svg class="abs" style="left:263px;top:633px;width:24px;height:24px;overflow:visible;" viewBox="0 0 24 24" fill="#1e1e1e"><g transform="translate(0.270 0.570) scale(0.95250 0.95250) translate(-0 -0)"><g stroke="#1e1e1e" stroke-width="0.3"><path fill-rule="evenodd" d="M6 3H8V5H16V3H18V5C19.105 5 20 5.895 20 7V19C20 20.105 19.105 21 18 21H6C4.895 21 4 20.105 4 19V7C4 5.895 4.895 5 6 5V3ZM18 6.500H6C5.724 6.500 5.500 6.724 5.500 7V8H18.500V7C18.500 6.724 18.276 6.500 18 6.500ZM18.500 9.500H5.500V19C5.500 19.276 5.724 19.500 6 19.500H18C18.276 19.500 18.500 19.276 18.500 19V9.500ZM11 11H13V13H11V11ZM7 11V13H9V11H7ZM15 13V11H17V13H15Z"/></g></g></svg>
<div class="t" style="left:219.70px;top:673.38px;font-size:11.9px;line-height:13px;color:#1e1e1e;white-space:normal;width:110px;text-align:center;">Legacy Widget</div>
<svg class="abs" style="left:364px;top:633px;width:24px;height:24px;overflow:visible;" viewBox="0 0 24 24" fill="#1e1e1e"><g transform="translate(0.370 0.570) scale(0.95250 0.95250) translate(-0 -0)"><g stroke="#1e1e1e" stroke-width="0.3"><path fill-rule="evenodd" d="M6 3H8V5H16V3H18V5C19.105 5 20 5.895 20 7V19C20 20.105 19.105 21 18 21H6C4.895 21 4 20.105 4 19V7C4 5.895 4.895 5 6 5V3ZM18 6.500H6C5.724 6.500 5.500 6.724 5.500 7V8H18.500V7C18.500 6.724 18.276 6.500 18 6.500ZM18.500 9.500H5.500V19C5.500 19.276 5.724 19.500 6 19.500H18C18.276 19.500 18.500 19.276 18.500 19V9.500ZM11 11H13V13H11V11ZM7 11V13H9V11H7ZM15 13V11H17V13H15Z"/></g></g></svg>
<div class="t" style="left:320.80px;top:673.38px;font-size:11.9px;line-height:13px;color:#1e1e1e;white-space:normal;width:110px;text-align:center;">Elementor<br>Library</div>
<svg class="abs" style="left:465px;top:633px;width:24px;height:24px;overflow:visible;" viewBox="0 0 24 24" fill="#1e1e1e"><g transform="translate(0.370 0.570) scale(0.95250 0.95250) translate(-0 -0)"><g stroke="#1e1e1e" stroke-width="0.3"><path fill-rule="evenodd" d="M6 3H8V5H16V3H18V5C19.105 5 20 5.895 20 7V19C20 20.105 19.105 21 18 21H6C4.895 21 4 20.105 4 19V7C4 5.895 4.895 5 6 5V3ZM18 6.500H6C5.724 6.500 5.500 6.724 5.500 7V8H18.500V7C18.500 6.724 18.276 6.500 18 6.500ZM18.500 9.500H5.500V19C5.500 19.276 5.724 19.500 6 19.500H18C18.276 19.500 18.500 19.276 18.500 19V9.500ZM11 11H13V13H11V11ZM7 11V13H9V11H7ZM15 13V11H17V13H15Z"/></g></g></svg>
<div class="t" style="left:421.80px;top:673.38px;font-size:11.9px;line-height:13px;color:#1e1e1e;white-space:normal;width:110px;text-align:center;">Meta</div>
<svg class="abs" style="left:263px;top:732px;width:24px;height:24px;overflow:visible;" viewBox="0 0 24 24" fill="#1e1e1e"><g transform="translate(0.270 0.570) scale(0.95250 0.95250) translate(-0 -0)"><g stroke="#1e1e1e" stroke-width="0.3"><path fill-rule="evenodd" d="M6 3H8V5H16V3H18V5C19.105 5 20 5.895 20 7V19C20 20.105 19.105 21 18 21H6C4.895 21 4 20.105 4 19V7C4 5.895 4.895 5 6 5V3ZM18 6.500H6C5.724 6.500 5.500 6.724 5.500 7V8H18.500V7C18.500 6.724 18.276 6.500 18 6.500ZM18.500 9.500H5.500V19C5.500 19.276 5.724 19.500 6 19.500H18C18.276 19.500 18.500 19.276 18.500 19V9.500ZM11 11H13V13H11V11ZM7 11V13H9V11H7ZM15 13V11H17V13H15Z"/></g></g></svg>
<svg class="abs" style="left:364px;top:732px;width:24px;height:24px;overflow:visible;" viewBox="0 0 24 24" fill="#1e1e1e"><g transform="translate(0.370 0.570) scale(0.95250 0.95250) translate(-0 -0)"><g stroke="#1e1e1e" stroke-width="0.3"><path fill-rule="evenodd" d="M18 4h-7c-1.100 0-2 .9-2 2v3H6c-1.100 0-2 .9-2 2v7c0 1.100.9 2 2 2h7c1.100 0 2-.9 2-2v-3h3c1.100 0 2-.9 2-2V6c0-1.100-.9-2-2-2zm-4.500 14c0 .3-.2.500-.5.500H6c-.3 0-.5-.2-.5-.5v-7c0-.3.200-.5.500-.5h3V13c0 1.100.9 2 2 2h2.500v3zm0-4.500H11c-.3 0-.5-.2-.5-.5v-2.500H13c.3 0 .5.200.5.500v2.500zm5-.5c0 .3-.2.500-.5.500h-3V11c0-1.100-.9-2-2-2h-2.500V6c0-.3.200-.5.500-.5h7c.3 0 .5.200.5.500v7z"/></g></g></svg>
<div class="card" style="top:161px;height:237px"></div>
<div class="t" style="left:559.50px;top:176.23px;font-size:13.05px;line-height:17px;color:#1e1e1e;-webkit-text-stroke:0.55px currentColor;">Sidebar Widget1</div>
<svg class="abs" style="left:1120px;top:173px;width:24px;height:24px;overflow:visible;" viewBox="0 0 24 24" fill="#1e1e1e"><g transform="translate(0.720 0.170) scale(0.95250 0.95250) translate(-0 -0)"><g stroke="#1e1e1e" stroke-width="0.3"><path d="M6.500 12.400L12 8l5.500 4.400-.9 1.200L12 10l-4.500 3.600-1-1.200z"/></g></g></svg>
<div class="t" style="left:559.50px;top:256.11px;font-size:15.24px;line-height:20px;color:#2271b1;font-family:'Liberation Serif',serif;text-decoration:underline;text-decoration-thickness:1px;text-underline-offset:1.5px;">Navigating the Future: What to Expect in 2025</div>
<div class="t" style="left:559.50px;top:273.61px;font-size:15.24px;line-height:20px;color:#2271b1;font-family:'Liberation Serif',serif;text-decoration:underline;text-decoration-thickness:1px;text-underline-offset:1.5px;">Looking Ahead: Forecasts and Trends to Watch in 2024</div>
<div class="t" style="left:559.50px;top:291.11px;font-size:15.24px;line-height:20px;color:#2271b1;font-family:'Liberation Serif',serif;text-decoration:underline;text-decoration-thickness:1px;text-underline-offset:1.5px;">Hello world!</div>
<div class="abs" style="left:559.1px;top:336.1px;width:584.9px;height:46.3px;border:1.6px solid #6b6b6b;border-radius:2.5px;background:#fff"></div>
<svg class="abs" style="left:840px;top:347px;width:24px;height:24px;overflow:visible;" viewBox="0 0 24 24" fill="#1e1e1e"><g transform="translate(0.170 0.970) scale(0.95250 0.95250) translate(-0 -0)"><g stroke="#1e1e1e" stroke-width="0.3"><path d="M11 12.500V17.500H12.500V12.500H17.500V11H12.500V6H11V11H6V12.500H11Z"/></g></g></svg>
<div class="card" style="top:425.20px;height:47px"></div>
<div class="t" style="left:559.50px;top:440.28px;font-size:13.05px;line-height:17px;color:#1e1e1e;-webkit-text-stroke:0.55px currentColor;">Sidebar Widget2</div>
<svg class="abs" style="left:1120px;top:437px;width:24px;height:23px;overflow:visible;" viewBox="0 0 24 23" fill="#1e1e1e"><g transform="translate(0.520 0.070) scale(0.95250 0.95250) translate(-0 -0)"><g stroke="#1e1e1e" stroke-width="0.3"><path d="M17.500 11.600L12 16l-5.500-4.400.9-1.200L12 14l4.500-3.600 1 1.200z"/></g></g></svg>
<div class="card" style="top:499.45px;height:47px"></div>
<div class="t" style="left:559.50px;top:514.53px;font-size:13.05px;line-height:17px;color:#1e1e1e;-webkit-text-stroke:0.55px currentColor;">Sidebar Widget3</div>
<svg class="abs" style="left:1120px;top:511px;width:24px;height:24px;overflow:visible;" viewBox="0 0 24 24" fill="#1e1e1e"><g transform="translate(0.520 0.320) scale(0.95250 0.95250) translate(-0 -0)"><g stroke="#1e1e1e" stroke-width="0.3"><path d="M17.500 11.600L12 16l-5.500-4.400.9-1.200L12 14l4.500-3.600 1 1.200z"/></g></g></svg>
<div class="card" style="top:573.70px;height:47px"></div>
<div class="t" style="left:559.50px;top:588.78px;font-size:13.05px;line-height:17px;color:#1e1e1e;-webkit-text-stroke:0.55px currentColor;">Footer 1</div>
<svg class="abs" style="left:1120px;top:585px;width:24px;height:24px;overflow:visible;" viewBox="0 0 24 24" fill="#1e1e1e"><g transform="translate(0.520 0.570) scale(0.95250 0.95250) translate(-0 -0)"><g stroke="#1e1e1e" stroke-width="0.3"><path d="M17.500 11.600L12 16l-5.500-4.400.9-1.200L12 14l4.500-3.600 1 1.200z"/></g></g></svg>
<div class="card" style="top:647.95px;height:47px"></div>
<div class="t" style="left:559.50px;top:663.03px;font-size:13.05px;line-height:17px;color:#1e1e1e;-webkit-text-stroke:0.55px currentColor;">Footer 2</div>
<svg class="abs" style="left:1120px;top:659px;width:24px;height:24px;overflow:visible;" viewBox="0 0 24 24" fill="#1e1e1e"><g transform="translate(0.520 0.820) scale(0.95250 0.95250) translate(-0 -0)"><g stroke="#1e1e1e" stroke-width="0.3"><path d="M17.500 11.600L12 16l-5.500-4.400.9-1.200L12 14l4.500-3.600 1 1.200z"/></g></g></svg>
<div class="card" style="top:722.20px;height:47px"></div>
<div class="t" style="left:559.50px;top:737.28px;font-size:13.05px;line-height:17px;color:#1e1e1e;-webkit-text-stroke:0.55px currentColor;">Inactive widgets</div>
<svg class="abs" style="left:1120px;top:734px;width:24px;height:23px;overflow:visible;" viewBox="0 0 24 23" fill="#1e1e1e"><g transform="translate(0.520 0.070) scale(0.95250 0.95250) translate(-0 -0)"><g stroke="#1e1e1e" stroke-width="0.3"><path d="M17.500 11.600L12 16l-5.500-4.400.9-1.200L12 14l4.500-3.600 1 1.200z"/></g></g></svg>
<div class="abs" style="left:1160.5px;top:134px;width:266.5px;height:45.5px;border-bottom:1px solid #e0e0e0"></div>
<div class="abs" style="left:1160.5px;top:178.3px;width:127.5px;height:1.2px;background:#0a7cba"></div>
<div class="t" style="left:1176.00px;top:148.21px;font-size:13.1px;line-height:17px;color:#1e1e1e;-webkit-text-stroke:0.5px currentColor;">Sidebar Widget1</div>
<div class="t" style="left:1303.90px;top:148.21px;font-size:13.1px;line-height:17px;color:#1e1e1e;-webkit-text-stroke:0.5px currentColor;">Block</div>
<svg class="abs" style="left:1401px;top:150px;width:12px;height:13px;overflow:visible;" viewBox="0 0 12 13" fill="none"><g transform="translate(0.000 0.250) scale(1.00000 1.00000) translate(6 6)"><path d="M-4.400 -4.400L4.400 4.400M4.400 -4.400L-4.400 4.400" stroke="#1e1e1e" stroke-width="1.500" fill="none"/></g></svg>
<svg class="abs" style="left:1175px;top:196px;width:24px;height:20px;overflow:visible;" viewBox="0 0 24 20" fill="none"><g transform="translate(0.000 0.000) scale(1.00000 1.00000) translate(-1175 -196)"><rect x="1179.650" y="204.700" width="15.400" height="7.750" rx="1.600" ry="1.600" fill="none" stroke="#1e1e1e" stroke-width="1.500"/><path d="M1181.500 200.500h4.500v3.500h-4.500zM1188.700 200.500h4.500v3.500h-4.500z" fill="#1e1e1e"/></g></svg>
<div class="t" style="left:1214.30px;top:195.60px;font-size:13.0px;line-height:17px;color:#1e1e1e;">Add widgets here to appear in</div>
<div class="t" style="left:1214.30px;top:214.20px;font-size:13.0px;line-height:17px;color:#1e1e1e;">your sidebar on blog posts and</div>
<div class="t" style="left:1214.30px;top:232.80px;font-size:13.0px;line-height:17px;color:#1e1e1e;">archive pages.</div>
<div class="abs" id="footer"></div>
<div class="t" style="left:234.40px;top:767.06px;font-size:12.8px;line-height:17px;color:#1e1e1e;-webkit-text-stroke:0.4px currentColor;">Widgets</div>
<svg class="abs" style="left:287px;top:766px;width:20px;height:20px;overflow:visible;" viewBox="0 0 20 20" fill="#1e1e1e"><g transform="translate(0.100 0.100) scale(0.79167 0.79167) translate(-0 -0)"><g stroke="#1e1e1e" stroke-width="0.6"><path d="M10.860 7.040l-.96.920L13.650 12l-3.750 4.040.96.920L15.500 12z"/></g></g></svg>
<div class="t" style="left:312.30px;top:767.06px;font-size:12.8px;line-height:17px;color:#1e1e1e;letter-spacing:-0.05px;-webkit-text-stroke:0.4px currentColor;">Sidebar Widget1</div>
</div></div>
<svg class="abs" style="left:175px;top:205px;width:175px;height:60px" viewBox="175 205 175 60"><ellipse cx="262.2" cy="235.15" rx="76.100" ry="21.050" fill="none" stroke="#c3090f" stroke-width="2.800"/></svg>
</body>
</html>
